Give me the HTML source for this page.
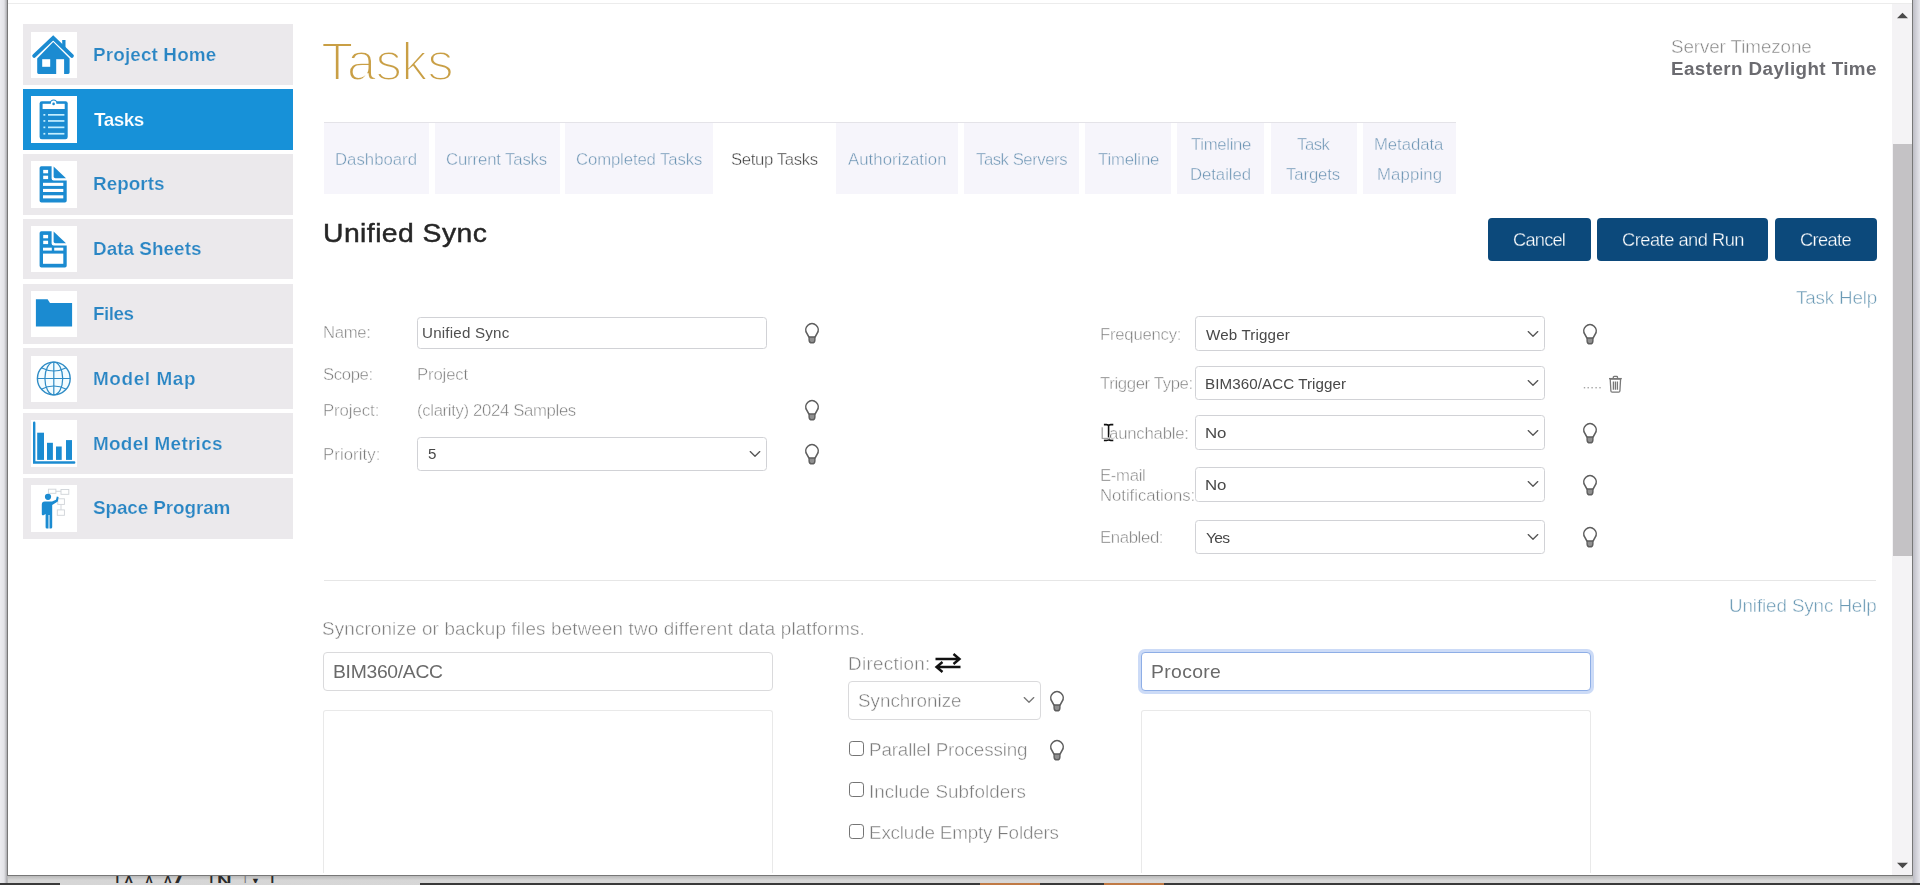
<!DOCTYPE html>
<html lang="en"><head><meta charset="utf-8"><title>Tasks - Unified Sync</title>
<style>
html,body{margin:0;padding:0}
body{width:1920px;height:885px;overflow:hidden;position:relative;background:#d9d9d9;font-family:'Liberation Sans',Arial,sans-serif}
.ab,.tx,.sbi,.tab,.sel,.inp,.box,.cb,.btn{position:absolute}
.tx{white-space:pre;z-index:5;transform-origin:0 0;will-change:transform}
#bg{position:absolute;left:0;top:0;width:1920px;height:885px;background:linear-gradient(90deg,#ebebef 0,#e3e3e7 4px,#b8b8bc 6.4px,#9a9a9e 7px,#d6d6d6 8px,#d9d9d9 1912px,#bebec6 1913px,#e6e6ec 1920px)}
#shade{position:absolute;left:8px;top:876px;width:1905px;height:4px;background:linear-gradient(#b9b9b9,#d4d4d4)}
.or{position:absolute;top:882.5px;height:2.5px;background:#c07a45}
#dark1{position:absolute;left:0;top:883px;width:60px;height:2px;background:#3a3a3a}
#dark2{position:absolute;left:420px;top:883px;width:1500px;height:2px;background:#3a3a3a}
#win{position:absolute;left:7px;top:-1px;width:1906px;height:877px;background:#fff;border:1px solid #777;border-top:none;box-sizing:border-box;overflow:hidden}
#topline{position:absolute;left:8px;top:2.5px;width:1904px;height:1.5px;background:#ececec}
#sbt{position:absolute;left:1892px;top:4px;width:20px;height:871px;background:#f4f3f5}
#sbth{position:absolute;left:1892.6px;top:143.5px;width:19.4px;height:412px;background:#c4c2c5}
.sbi{left:23.3px;width:269.5px;height:60.5px;background:#ebe9ec}
.sbi.act{background:#1791d8}
.ib{position:absolute;left:7.6px;top:7.3px;width:46.2px;height:46.4px;background:#fff}
#tabline{position:absolute;left:323.5px;top:121.7px;width:1132.5px;height:1.3px;background:#e4e3e8}
.tab{top:123px;height:70.7px;background:#f6f5fb}
.tab.on{background:#fff}
.btn{top:217.5px;height:43.2px;background:#0c497b;border-radius:4px}
.sel,.inp{box-sizing:border-box;border:1px solid #d1d2d6;border-radius:3.5px;background:#fff}
.big{border-color:#dadadc;border-radius:4px}
.box{box-sizing:border-box;border:1px solid #e9e9e9;border-bottom:none;border-radius:3px 3px 0 0;background:#fff}
.foc{border:1.5px solid #8eaee6;box-shadow:0 0 0 3px rgba(120,160,235,.38)}
.cb{width:15px;height:15px;box-sizing:border-box;border:1.5px solid #747474;border-radius:3.2px;background:#fff}
#hr{position:absolute;left:323.5px;top:580.2px;width:1552.5px;height:1.2px;background:#e6e6e6}
</style></head><body>

<div id="bg"></div><div id="shade"></div><div id="dark1"></div><div id="dark2"></div><div class="or" style="left:980px;width:60px"></div><div class="or" style="left:1104px;width:60px"></div>
<div id="win"></div>
<div id="topline"></div>
<div id="sbt"></div><div id="sbth"></div>
<svg class="ab" style="left:1896px;top:12px" width="13" height="7" viewBox="0 0 13 7"><path d="M1 6.2 L6.5 0.8 L12 6.2 z" fill="#4a4a4a"/></svg>
<svg class="ab" style="left:1896px;top:861.5px" width="13" height="7" viewBox="0 0 13 7"><path d="M1 0.8 L6.5 6.2 L12 0.8 z" fill="#4a4a4a"/></svg>
<nav><div class="sbi" style="top:24.4px"><i class="ib"></i></div>
<div class="sbi act" style="top:89.2px"><i class="ib"></i></div>
<div class="sbi" style="top:154.0px"><i class="ib"></i></div>
<div class="sbi" style="top:218.8px"><i class="ib"></i></div>
<div class="sbi" style="top:283.6px"><i class="ib"></i></div>
<div class="sbi" style="top:348.4px"><i class="ib"></i></div>
<div class="sbi" style="top:413.2px"><i class="ib"></i></div>
<div class="sbi" style="top:478.0px"><i class="ib"></i></div>
</nav>
<svg class="ab" style="left:24px;top:24px;z-index:3" width="60" height="60" viewBox="0 0 60 60"><path d="M10.2 31.9 L29.2 13.9 L47.9 31.9" fill="none" stroke="#1b8bd1" stroke-width="3.9" stroke-linejoin="miter" stroke-linecap="round"/>
<rect x="38.2" y="16" width="3.3" height="8" fill="#1b8bd1"/>
<path d="M29.2 18.1 L45.6 34.4 V48.6 a1.4 1.4 0 0 1 -1.4 1.4 H14.6 a1.4 1.4 0 0 1 -1.4 -1.4 V34.4 z" fill="#1b8bd1"/>
<rect x="18.2" y="35.2" width="8" height="7.6" fill="#fff"/><rect x="32.2" y="35.2" width="7.9" height="15.2" fill="#fff"/></svg>
<svg class="ab" style="left:24px;top:89px;z-index:3" width="60" height="60" viewBox="0 0 60 60"><rect x="15.6" y="12.3" width="28.1" height="37.9" rx="2.2" fill="#1b8bd1"/>
<circle cx="29.6" cy="13.9" r="3.5" fill="#1b8bd1"/>
<path d="M18.6 14.8 H40.7 V20 H18.6 z" fill="#fff"/>
<circle cx="29.6" cy="14.3" r="2.7" fill="#fff"/>
<circle cx="29.6" cy="14.9" r="1.3" fill="#1b8bd1"/>
<g fill="#c4eeff"><rect x="24" y="25" width="16.4" height="1.7"/><rect x="24" y="31.1" width="16.4" height="1.7"/><rect x="24" y="37.5" width="16.4" height="1.7"/><rect x="24" y="43.9" width="16.4" height="1.7"/>
<rect x="19.4" y="25" width="1.9" height="1.7"/><rect x="19.4" y="31.1" width="1.9" height="1.7"/><rect x="19.4" y="37.5" width="1.9" height="1.7"/><rect x="19.4" y="43.9" width="1.9" height="1.7"/></g></svg>
<svg class="ab" style="left:24px;top:154px;z-index:3" width="60" height="60" viewBox="0 0 60 60"><path d="M17.4 12.2 H27.6 V24.4 a2 2 0 0 0 2 2 H42.7 V46.7 a1.8 1.8 0 0 1 -1.8 1.8 H17.4 a1.8 1.8 0 0 1 -1.8 -1.8 V14 a1.8 1.8 0 0 1 1.8 -1.8 z" fill="#1b8bd1"/>
<path d="M29.6 12.6 L42 24.3 H31.4 a1.8 1.8 0 0 1 -1.8 -1.8 z" fill="#1b8bd1"/>
<rect x="19.2" y="15.9" width="4.9" height="3.4" fill="#fff"/><rect x="19.2" y="21.7" width="4.9" height="3.4" fill="#fff"/><rect x="19" y="28.8" width="20.3" height="3.1" fill="#fff"/><rect x="19" y="34.9" width="20.3" height="3.1" fill="#fff"/><rect x="19" y="41.3" width="20.3" height="3.1" fill="#fff"/></svg>
<svg class="ab" style="left:24px;top:219px;z-index:3" width="60" height="60" viewBox="0 0 60 60"><path d="M17.4 12.2 H27.6 V24.4 a2 2 0 0 0 2 2 H42.7 V46.7 a1.8 1.8 0 0 1 -1.8 1.8 H17.4 a1.8 1.8 0 0 1 -1.8 -1.8 V14 a1.8 1.8 0 0 1 1.8 -1.8 z" fill="#1b8bd1"/>
<path d="M29.6 12.6 L42 24.3 H31.4 a1.8 1.8 0 0 1 -1.8 -1.8 z" fill="#1b8bd1"/>
<rect x="19.2" y="15.9" width="4.9" height="3.4" fill="#fff"/><rect x="19.2" y="21.7" width="4.9" height="3.4" fill="#fff"/><rect x="19" y="28.7" width="8.8" height="2.9" fill="#fff"/><rect x="30.2" y="28.7" width="9.1" height="2.9" fill="#fff"/><rect x="19" y="34.6" width="20.3" height="10.2" fill="#fff"/></svg>
<svg class="ab" style="left:24px;top:283px;z-index:3" width="60" height="60" viewBox="0 0 60 60"><path d="M11.9 16.2 H23.6 L26 20 H48.1 V43.5 H11.9 z" fill="#1b8bd1"/></svg>
<svg class="ab" style="left:24px;top:348px;z-index:3" width="60" height="60" viewBox="0 0 60 60"><circle cx="29.8" cy="30.5" r="16.4" fill="#f3fcff" stroke="#2f8cc6" stroke-width="1.4"/>
<g fill="none" stroke="#2f8cc6" stroke-width="1.2"><ellipse cx="29.8" cy="30.5" rx="8.9" ry="16.4"/><path d="M29.8 14.1 V46.9 M13.4 30.5 H46.2"/>
<path d="M17.3 19.8 Q29.8 26.2 42.3 19.8 M17.3 41.2 Q29.8 34.8 42.3 41.2"/></g></svg>
<svg class="ab" style="left:24px;top:413px;z-index:3" width="60" height="60" viewBox="0 0 60 60"><path d="M10.2 9.8 V49.5 H50.2" fill="none" stroke="#1b8bd1" stroke-width="2.4" stroke-linecap="round"/>
<rect x="13.2" y="19.7" width="6.8" height="27.2" fill="#1b8bd1"/><rect x="23" y="29.8" width="5.9" height="17.1" fill="#1b8bd1"/><rect x="32" y="33.5" width="5.7" height="13.4" fill="#1b8bd1"/><rect x="42" y="27.1" width="6" height="19.8" fill="#1b8bd1"/></svg>
<svg class="ab" style="left:24px;top:478px;z-index:3" width="60" height="60" viewBox="0 0 60 60"><g fill="#fff" stroke="#cfd3d8" stroke-width="0.9"><rect x="24.4" y="11.2" width="7.5" height="4.1"/><rect x="37" y="11.5" width="7.8" height="4.8"/><rect x="33.3" y="31.9" width="7.1" height="5.4"/><rect x="33.8" y="20.8" width="6.6" height="5.6"/><path d="M31.9 13.3 H37 M37 27 V31.9" fill="none"/></g>
<circle cx="24" cy="18.8" r="3.1" fill="#1b8bd1"/>
<path d="M19.2 23.6 H28 L32 21.8 L32.8 18.6 L34.6 19 L33.8 23.6 L28.2 27 V49.2 a1.3 1.3 0 0 1 -1.3 1.3 h-1.4 V37 h-1 V50.5 h-1.6 a1.3 1.3 0 0 1 -1.3 -1.3 V36 l-2 1.2 a1.2 1.2 0 0 1 -1.8 -1 V26.6 a3 3 0 0 1 3 -3 z" fill="#1b8bd1"/></svg>
<div id="tabline"></div>
<div class="tab" style="left:323.8px;width:104.8px"></div>
<div class="tab" style="left:435px;width:124.8px"></div>
<div class="tab" style="left:565px;width:148.3px"></div>
<div class="tab on" style="left:713.3px;width:122.7px"></div>
<div class="tab" style="left:836px;width:122.4px"></div>
<div class="tab" style="left:964px;width:115.3px"></div>
<div class="tab" style="left:1085px;width:86.3px"></div>
<div class="tab" style="left:1176.8px;width:87.2px"></div>
<div class="tab" style="left:1271.2px;width:85.8px"></div>
<div class="tab" style="left:1362.5px;width:93.5px"></div>

<div class="btn" style="left:1488px;width:102.5px"></div>
<div class="btn" style="left:1596.8px;width:171.5px"></div>
<div class="btn" style="left:1775px;width:102px"></div>
<div class="inp" style="left:417px;top:316.6px;width:350px;height:32.2px"></div><div class="sel" style="left:417px;top:436.6px;width:350px;height:34px"></div><svg class="ab" style="left:748px;top:448.6px" width="14" height="10" viewBox="0 0 14 10"><path d="M2.2 2.6 L7 7.2 L11.8 2.6" fill="none" stroke="#555" stroke-width="1.35" stroke-linecap="round" stroke-linejoin="round"/></svg><div class="sel" style="left:1195px;top:316.4px;width:349.7px;height:34.4px"></div><svg class="ab" style="left:1526px;top:328.59999999999997px" width="14" height="10" viewBox="0 0 14 10"><path d="M2.2 2.6 L7 7.2 L11.8 2.6" fill="none" stroke="#555" stroke-width="1.35" stroke-linecap="round" stroke-linejoin="round"/></svg><div class="sel" style="left:1195px;top:365.9px;width:349.7px;height:34.4px"></div><svg class="ab" style="left:1526px;top:378.09999999999997px" width="14" height="10" viewBox="0 0 14 10"><path d="M2.2 2.6 L7 7.2 L11.8 2.6" fill="none" stroke="#555" stroke-width="1.35" stroke-linecap="round" stroke-linejoin="round"/></svg><div class="sel" style="left:1195px;top:415.4px;width:349.7px;height:34.2px"></div><svg class="ab" style="left:1526px;top:427.5px" width="14" height="10" viewBox="0 0 14 10"><path d="M2.2 2.6 L7 7.2 L11.8 2.6" fill="none" stroke="#555" stroke-width="1.35" stroke-linecap="round" stroke-linejoin="round"/></svg><div class="sel" style="left:1195px;top:467.2px;width:349.7px;height:34.4px"></div><svg class="ab" style="left:1526px;top:479.4px" width="14" height="10" viewBox="0 0 14 10"><path d="M2.2 2.6 L7 7.2 L11.8 2.6" fill="none" stroke="#555" stroke-width="1.35" stroke-linecap="round" stroke-linejoin="round"/></svg><div class="sel" style="left:1195px;top:520.3px;width:349.7px;height:33.6px"></div><svg class="ab" style="left:1526px;top:532.0999999999999px" width="14" height="10" viewBox="0 0 14 10"><path d="M2.2 2.6 L7 7.2 L11.8 2.6" fill="none" stroke="#555" stroke-width="1.35" stroke-linecap="round" stroke-linejoin="round"/></svg><div class="inp big" style="left:323.2px;top:651.5px;width:449.8px;height:39px"></div><div class="box" style="left:323.2px;top:710px;width:449.8px;height:163px"></div><div class="box" style="left:1141.4px;top:710px;width:449.8px;height:163px"></div><div class="sel big" style="left:848.2px;top:680.6px;width:192.6px;height:39.4px"></div><svg class="ab" style="left:1022px;top:695.3px" width="14" height="10" viewBox="0 0 14 10"><path d="M2.2 2.6 L7 7.2 L11.8 2.6" fill="none" stroke="#777" stroke-width="1.35" stroke-linecap="round" stroke-linejoin="round"/></svg><div class="inp big foc" style="left:1141.4px;top:651.8px;width:449.8px;height:38.9px"></div><svg class="ab" style="left:803.20px;top:321.30px" width="18" height="24" viewBox="0 0 18 24"><path d="M6.1 16.4 L3.9 12.4 A6.2 6.2 0 1 1 14.1 12.4 L11.9 16.4" fill="#fff" stroke="#5e5e5e" stroke-width="1.6" stroke-linejoin="round"/><path d="M6.1 16 h5.8 v2.9 a2.9 2.9 0 0 1 -5.8 0 z" fill="#909090" stroke="#5e5e5e" stroke-width="1.4"/></svg><svg class="ab" style="left:803.20px;top:398.30px" width="18" height="24" viewBox="0 0 18 24"><path d="M6.1 16.4 L3.9 12.4 A6.2 6.2 0 1 1 14.1 12.4 L11.9 16.4" fill="#fff" stroke="#5e5e5e" stroke-width="1.6" stroke-linejoin="round"/><path d="M6.1 16 h5.8 v2.9 a2.9 2.9 0 0 1 -5.8 0 z" fill="#909090" stroke="#5e5e5e" stroke-width="1.4"/></svg><svg class="ab" style="left:803.20px;top:441.80px" width="18" height="24" viewBox="0 0 18 24"><path d="M6.1 16.4 L3.9 12.4 A6.2 6.2 0 1 1 14.1 12.4 L11.9 16.4" fill="#fff" stroke="#5e5e5e" stroke-width="1.6" stroke-linejoin="round"/><path d="M6.1 16 h5.8 v2.9 a2.9 2.9 0 0 1 -5.8 0 z" fill="#909090" stroke="#5e5e5e" stroke-width="1.4"/></svg><svg class="ab" style="left:1581.10px;top:321.80px" width="18" height="24" viewBox="0 0 18 24"><path d="M6.1 16.4 L3.9 12.4 A6.2 6.2 0 1 1 14.1 12.4 L11.9 16.4" fill="#fff" stroke="#5e5e5e" stroke-width="1.6" stroke-linejoin="round"/><path d="M6.1 16 h5.8 v2.9 a2.9 2.9 0 0 1 -5.8 0 z" fill="#909090" stroke="#5e5e5e" stroke-width="1.4"/></svg><svg class="ab" style="left:1581.10px;top:420.80px" width="18" height="24" viewBox="0 0 18 24"><path d="M6.1 16.4 L3.9 12.4 A6.2 6.2 0 1 1 14.1 12.4 L11.9 16.4" fill="#fff" stroke="#5e5e5e" stroke-width="1.6" stroke-linejoin="round"/><path d="M6.1 16 h5.8 v2.9 a2.9 2.9 0 0 1 -5.8 0 z" fill="#909090" stroke="#5e5e5e" stroke-width="1.4"/></svg><svg class="ab" style="left:1581.10px;top:472.80px" width="18" height="24" viewBox="0 0 18 24"><path d="M6.1 16.4 L3.9 12.4 A6.2 6.2 0 1 1 14.1 12.4 L11.9 16.4" fill="#fff" stroke="#5e5e5e" stroke-width="1.6" stroke-linejoin="round"/><path d="M6.1 16 h5.8 v2.9 a2.9 2.9 0 0 1 -5.8 0 z" fill="#909090" stroke="#5e5e5e" stroke-width="1.4"/></svg><svg class="ab" style="left:1581.10px;top:525.30px" width="18" height="24" viewBox="0 0 18 24"><path d="M6.1 16.4 L3.9 12.4 A6.2 6.2 0 1 1 14.1 12.4 L11.9 16.4" fill="#fff" stroke="#5e5e5e" stroke-width="1.6" stroke-linejoin="round"/><path d="M6.1 16 h5.8 v2.9 a2.9 2.9 0 0 1 -5.8 0 z" fill="#909090" stroke="#5e5e5e" stroke-width="1.4"/></svg><svg class="ab" style="left:1048.40px;top:688.60px" width="18" height="24" viewBox="0 0 18 24"><path d="M6.1 16.4 L3.9 12.4 A6.2 6.2 0 1 1 14.1 12.4 L11.9 16.4" fill="#fff" stroke="#5e5e5e" stroke-width="1.6" stroke-linejoin="round"/><path d="M6.1 16 h5.8 v2.9 a2.9 2.9 0 0 1 -5.8 0 z" fill="#909090" stroke="#5e5e5e" stroke-width="1.4"/></svg><svg class="ab" style="left:1048.40px;top:738.00px" width="18" height="24" viewBox="0 0 18 24"><path d="M6.1 16.4 L3.9 12.4 A6.2 6.2 0 1 1 14.1 12.4 L11.9 16.4" fill="#fff" stroke="#5e5e5e" stroke-width="1.6" stroke-linejoin="round"/><path d="M6.1 16 h5.8 v2.9 a2.9 2.9 0 0 1 -5.8 0 z" fill="#909090" stroke="#5e5e5e" stroke-width="1.4"/></svg><div class="cb" style="left:848.6px;top:741px"></div><div class="cb" style="left:848.6px;top:782.4px"></div><div class="cb" style="left:848.6px;top:823.6px"></div>
<div id="hr"></div>
<svg class="ab" style="left:1581px;top:374px" width="44" height="22" viewBox="0 0 44 22">
<g fill="#a4a4a4"><rect x="2.8" y="13" width="1.4" height="1.4"/><rect x="6.5" y="13" width="1.4" height="1.4"/><rect x="10.4" y="13" width="1.4" height="1.4"/><rect x="14.4" y="13" width="1.4" height="1.4"/><rect x="18.3" y="13" width="1.4" height="1.4"/></g>
<g fill="none" stroke="#787878" stroke-width="1.3"><path d="M29.2 5 h10.4 l-0.7 12 a1.3 1.3 0 0 1 -1.3 1.2 h-6.4 a1.3 1.3 0 0 1 -1.3 -1.2 z"/><path d="M28 4.6 h12.8"/><path d="M32.3 4.4 v-1.2 a0.8 0.8 0 0 1 .8 -.8 h2.6 a.8 .8 0 0 1 .8 .8 v1.2"/><path d="M32.4 7.5 v8.2 M34.4 7.5 v8.2 M36.4 7.5 v8.2"/></g></svg>
<svg class="ab" style="left:1103px;top:422px" width="12" height="21" viewBox="0 0 12 21"><path d="M0.9 2.6 h2.6 q1.9 0 2.1 1.3 q.2 -1.3 2.1 -1.3 h2.6 M5.6 3.4 v14.2 M0.9 18.4 h2.6 q1.9 0 2.1 -1.3 q.2 1.3 2.1 1.3 h2.6" fill="none" stroke="#111" stroke-width="1.6"/></svg>
<svg class="ab" style="left:933px;top:651px" width="30" height="24" viewBox="0 0 30 24"><g fill="none" stroke="#111" stroke-width="2.4" stroke-linecap="butt" stroke-linejoin="miter"><path d="M2.5 8 H26 M20.5 3 L26.5 8 L20.5 13"/><path d="M27.5 16 H4 M9.5 11 L3.5 16 L9.5 21"/></g></svg>
<span class="tx" id="sb0" style="left:92.57px;top:43.86px;font-size:18px;line-height:23px;font-weight:700;color:#2a86c4;letter-spacing:0.125px;transform:scaleX(1.05);-webkit-text-stroke:0.2px #ebe9ec;">Project Home</span>
<span class="tx" id="sb1" style="left:93.69px;top:108.66px;font-size:18px;line-height:23px;font-weight:700;color:#fff;letter-spacing:-0.448px;transform:scaleX(1.05);-webkit-text-stroke:0.2px #1791d8;">Tasks</span>
<span class="tx" id="sb2" style="left:92.57px;top:173.46px;font-size:18px;line-height:23px;font-weight:700;color:#2a86c4;letter-spacing:0.008px;transform:scaleX(1.05);-webkit-text-stroke:0.2px #ebe9ec;">Reports</span>
<span class="tx" id="sb3" style="left:92.57px;top:238.26px;font-size:18px;line-height:23px;font-weight:700;color:#2a86c4;letter-spacing:0.026px;transform:scaleX(1.05);-webkit-text-stroke:0.2px #ebe9ec;">Data Sheets</span>
<span class="tx" id="sb4" style="left:92.57px;top:303.06px;font-size:18px;line-height:23px;font-weight:700;color:#2a86c4;letter-spacing:-0.471px;transform:scaleX(1.05);-webkit-text-stroke:0.2px #ebe9ec;">Files</span>
<span class="tx" id="sb5" style="left:92.57px;top:367.86px;font-size:18px;line-height:23px;font-weight:700;color:#2a86c4;letter-spacing:0.574px;transform:scaleX(1.05);-webkit-text-stroke:0.2px #ebe9ec;">Model Map</span>
<span class="tx" id="sb6" style="left:92.57px;top:432.66px;font-size:18px;line-height:23px;font-weight:700;color:#2a86c4;letter-spacing:0.273px;transform:scaleX(1.05);-webkit-text-stroke:0.2px #ebe9ec;">Model Metrics</span>
<span class="tx" id="sb7" style="left:92.57px;top:497.46px;font-size:18px;line-height:23px;font-weight:700;color:#2a86c4;letter-spacing:-0.103px;transform:scaleX(1.05);-webkit-text-stroke:0.2px #ebe9ec;">Space Program</span>
<span class="tx" id="title" style="left:321.07px;top:27.14px;font-size:53px;line-height:69px;font-weight:400;color:#c99f45;letter-spacing:-0.706px;transform:scaleX(1.0);-webkit-text-stroke:2.2px #fff;">Tasks</span>
<span class="tx" id="tz1" style="left:1671.37px;top:35.76px;font-size:18px;line-height:23px;font-weight:400;color:#858585;letter-spacing:-0.099px;transform:scaleX(1.045);-webkit-text-stroke:0.45px #fff;">Server Timezone</span>
<span class="tx" id="tz2" style="left:1671.37px;top:57.86px;font-size:18px;line-height:23px;font-weight:700;color:#6b6b70;letter-spacing:0.394px;transform:scaleX(1.045);">Eastern Daylight Time</span>
<span class="tx" id="tab0" style="left:335.25px;top:149.46px;font-size:16px;line-height:21px;font-weight:400;color:#6c94b3;letter-spacing:0.024px;transform:scaleX(1.045);-webkit-text-stroke:0.4px #f6f5fb;">Dashboard</span>
<span class="tx" id="tab1" style="left:446.00px;top:149.46px;font-size:16px;line-height:21px;font-weight:400;color:#6c94b3;letter-spacing:-0.130px;transform:scaleX(1.045);-webkit-text-stroke:0.4px #f6f5fb;">Current Tasks</span>
<span class="tx" id="tab2" style="left:576.00px;top:149.46px;font-size:16px;line-height:21px;font-weight:400;color:#6c94b3;letter-spacing:-0.116px;transform:scaleX(1.045);-webkit-text-stroke:0.4px #f6f5fb;">Completed Tasks</span>
<span class="tx" id="tab3" style="left:730.60px;top:149.46px;font-size:16px;line-height:21px;font-weight:400;color:#3c3c3c;letter-spacing:-0.350px;transform:scaleX(1.045);-webkit-text-stroke:0.4px #fff;">Setup Tasks</span>
<span class="tx" id="tab4" style="left:847.62px;top:149.46px;font-size:16px;line-height:21px;font-weight:400;color:#6c94b3;letter-spacing:0.072px;transform:scaleX(1.045);-webkit-text-stroke:0.4px #f6f5fb;">Authorization</span>
<span class="tx" id="tab5" style="left:976.16px;top:149.46px;font-size:16px;line-height:21px;font-weight:400;color:#6c94b3;letter-spacing:-0.447px;transform:scaleX(1.045);-webkit-text-stroke:0.4px #f6f5fb;">Task Servers</span>
<span class="tx" id="tab6" style="left:1098.16px;top:149.46px;font-size:16px;line-height:21px;font-weight:400;color:#6c94b3;letter-spacing:-0.173px;transform:scaleX(1.045);-webkit-text-stroke:0.4px #f6f5fb;">Timeline</span>
<span class="tx" id="tab7a" style="left:1190.80px;top:134.06px;font-size:16px;line-height:21px;font-weight:400;color:#6c94b3;letter-spacing:-0.296px;transform:scaleX(1.045);-webkit-text-stroke:0.4px #f6f5fb;">Timeline</span>
<span class="tx" id="tab7b" style="left:1190.30px;top:164.36px;font-size:16px;line-height:21px;font-weight:400;color:#6c94b3;letter-spacing:-0.046px;transform:scaleX(1.045);-webkit-text-stroke:0.4px #f6f5fb;">Detailed</span>
<span class="tx" id="tab8a" style="left:1296.80px;top:134.06px;font-size:16px;line-height:21px;font-weight:400;color:#6c94b3;letter-spacing:-0.460px;transform:scaleX(1.045);-webkit-text-stroke:0.4px #f6f5fb;">Task</span>
<span class="tx" id="tab8b" style="left:1285.60px;top:164.36px;font-size:16px;line-height:21px;font-weight:400;color:#6c94b3;letter-spacing:-0.112px;transform:scaleX(1.045);-webkit-text-stroke:0.4px #f6f5fb;">Targets</span>
<span class="tx" id="tab9a" style="left:1373.80px;top:134.06px;font-size:16px;line-height:21px;font-weight:400;color:#6c94b3;letter-spacing:-0.057px;transform:scaleX(1.045);-webkit-text-stroke:0.4px #f6f5fb;">Metadata</span>
<span class="tx" id="tab9b" style="left:1376.80px;top:164.36px;font-size:16px;line-height:21px;font-weight:400;color:#6c94b3;letter-spacing:0.155px;transform:scaleX(1.045);-webkit-text-stroke:0.4px #f6f5fb;">Mapping</span>
<span class="tx" id="h2" style="left:322.55px;top:215.74px;font-size:26px;line-height:34px;font-weight:400;color:#262626;letter-spacing:0.400px;transform:scaleX(1.09);-webkit-text-stroke:0.45px #262626;">Unified Sync</span>
<span class="tx" id="b0" style="left:1513.15px;top:229.19px;font-size:17.5px;line-height:23px;font-weight:400;color:#fff;letter-spacing:-0.764px;transform:scaleX(1.045);-webkit-text-stroke:0.3px #0c497b;">Cancel</span>
<span class="tx" id="b1" style="left:1621.85px;top:229.19px;font-size:17.5px;line-height:23px;font-weight:400;color:#fff;letter-spacing:-0.488px;transform:scaleX(1.045);-webkit-text-stroke:0.3px #0c497b;">Create and Run</span>
<span class="tx" id="b2" style="left:1799.70px;top:229.19px;font-size:17.5px;line-height:23px;font-weight:400;color:#fff;letter-spacing:-0.613px;transform:scaleX(1.045);-webkit-text-stroke:0.3px #0c497b;">Create</span>
<span class="tx" id="help1" style="left:1796.12px;top:287.26px;font-size:18px;line-height:23px;font-weight:400;color:#6b9ab5;letter-spacing:-0.165px;transform:scaleX(1.045);-webkit-text-stroke:0.45px #fff;">Task Help</span>
<span class="tx" id="l0" style="left:323.00px;top:322.21px;font-size:16px;line-height:21px;font-weight:400;color:#7a7a7a;letter-spacing:-0.296px;transform:scaleX(1.045);-webkit-text-stroke:0.45px #fff;">Name:</span>
<span class="tx" id="l1" style="left:322.50px;top:364.46px;font-size:16px;line-height:21px;font-weight:400;color:#7a7a7a;letter-spacing:-0.373px;transform:scaleX(1.045);-webkit-text-stroke:0.45px #fff;">Scope:</span>
<span class="tx" id="l2" style="left:322.50px;top:400.21px;font-size:16px;line-height:21px;font-weight:400;color:#7a7a7a;letter-spacing:-0.053px;transform:scaleX(1.045);-webkit-text-stroke:0.45px #fff;">Project:</span>
<span class="tx" id="l3" style="left:322.50px;top:444.46px;font-size:16px;line-height:21px;font-weight:400;color:#7a7a7a;letter-spacing:0.076px;transform:scaleX(1.045);-webkit-text-stroke:0.45px #fff;">Priority:</span>
<span class="tx" id="v0" style="left:422.34px;top:324.23px;font-size:14.5px;line-height:19px;font-weight:400;color:#505050;letter-spacing:0.196px;transform:scaleX(1.045);">Unified Sync</span>
<span class="tx" id="v1" style="left:416.50px;top:364.46px;font-size:16px;line-height:21px;font-weight:400;color:#7a7a7a;letter-spacing:-0.133px;transform:scaleX(1.045);-webkit-text-stroke:0.45px #fff;">Project</span>
<span class="tx" id="v2" style="left:416.50px;top:400.21px;font-size:16px;line-height:21px;font-weight:400;color:#7a7a7a;letter-spacing:-0.324px;transform:scaleX(1.045);-webkit-text-stroke:0.45px #fff;">(clarity) 2024 Samples</span>
<span class="tx" id="v3" style="left:427.89px;top:445.48px;font-size:14.5px;line-height:19px;font-weight:400;color:#484848;letter-spacing:0.000px;transform:scaleX(1.045);">5</span>
<span class="tx" id="r0" style="left:1099.50px;top:324.46px;font-size:16px;line-height:21px;font-weight:400;color:#7a7a7a;letter-spacing:-0.228px;transform:scaleX(1.045);-webkit-text-stroke:0.45px #fff;">Frequency:</span>
<span class="tx" id="r1" style="left:1099.50px;top:373.21px;font-size:16px;line-height:21px;font-weight:400;color:#7a7a7a;letter-spacing:-0.349px;transform:scaleX(1.045);-webkit-text-stroke:0.45px #fff;">Trigger Type:</span>
<span class="tx" id="r2" style="left:1099.50px;top:423.21px;font-size:16px;line-height:21px;font-weight:400;color:#7a7a7a;letter-spacing:-0.201px;transform:scaleX(1.045);-webkit-text-stroke:0.45px #fff;">Launchable:</span>
<span class="tx" id="r3a" style="left:1099.50px;top:465.21px;font-size:16px;line-height:21px;font-weight:400;color:#7a7a7a;letter-spacing:-0.312px;transform:scaleX(1.045);-webkit-text-stroke:0.45px #fff;">E-mail</span>
<span class="tx" id="r3b" style="left:1099.50px;top:485.21px;font-size:16px;line-height:21px;font-weight:400;color:#7a7a7a;letter-spacing:-0.034px;transform:scaleX(1.045);-webkit-text-stroke:0.45px #fff;">Notifications:</span>
<span class="tx" id="r4" style="left:1099.50px;top:527.36px;font-size:16px;line-height:21px;font-weight:400;color:#7a7a7a;letter-spacing:-0.343px;transform:scaleX(1.045);-webkit-text-stroke:0.45px #fff;">Enabled:</span>
<span class="tx" id="s0" style="left:1206.34px;top:325.98px;font-size:14.5px;line-height:19px;font-weight:400;color:#484848;letter-spacing:0.144px;transform:scaleX(1.045);">Web Trigger</span>
<span class="tx" id="s1" style="left:1205.34px;top:375.23px;font-size:14.5px;line-height:19px;font-weight:400;color:#484848;letter-spacing:0.071px;transform:scaleX(1.045);">BIM360/ACC Trigger</span>
<span class="tx" id="s2" style="left:1205.24px;top:424.23px;font-size:14.5px;line-height:19px;font-weight:400;color:#484848;letter-spacing:-0.212px;transform:scaleX(1.16);">No</span>
<span class="tx" id="s3" style="left:1205.24px;top:475.98px;font-size:14.5px;line-height:19px;font-weight:400;color:#484848;letter-spacing:-0.212px;transform:scaleX(1.16);">No</span>
<span class="tx" id="s4" style="left:1206.31px;top:529.18px;font-size:14.5px;line-height:19px;font-weight:400;color:#484848;letter-spacing:-0.676px;transform:scaleX(1.08);">Yes</span>
<span class="tx" id="desc" style="left:322.37px;top:617.51px;font-size:18px;line-height:23px;font-weight:400;color:#7a7a7a;letter-spacing:0.150px;transform:scaleX(1.045);-webkit-text-stroke:0.45px #fff;">Syncronize or backup files between two different data platforms.</span>
<span class="tx" id="help2" style="left:1728.87px;top:595.46px;font-size:18px;line-height:23px;font-weight:400;color:#6b9ab5;letter-spacing:-0.106px;transform:scaleX(1.045);-webkit-text-stroke:0.45px #fff;">Unified Sync Help</span>
<span class="tx" id="in1" style="left:333.09px;top:660.34px;font-size:18.5px;line-height:24px;font-weight:400;color:#6a6a6a;letter-spacing:-0.293px;transform:scaleX(1.045);">BIM360/ACC</span>
<span class="tx" id="in2" style="left:1150.84px;top:659.59px;font-size:18.5px;line-height:24px;font-weight:400;color:#6a6a6a;letter-spacing:0.339px;transform:scaleX(1.045);">Procore</span>
<span class="tx" id="dir" style="left:847.62px;top:652.76px;font-size:18px;line-height:23px;font-weight:400;color:#7a7a7a;letter-spacing:0.298px;transform:scaleX(1.045);-webkit-text-stroke:0.45px #fff;">Direction:</span>
<span class="tx" id="sync" style="left:858.37px;top:690.26px;font-size:18px;line-height:23px;font-weight:400;color:#7a7a7a;letter-spacing:-0.001px;transform:scaleX(1.045);-webkit-text-stroke:0.45px #fff;">Synchronize</span>
<span class="tx" id="c0" style="left:868.87px;top:739.01px;font-size:18px;line-height:23px;font-weight:400;color:#7a7a7a;letter-spacing:-0.133px;transform:scaleX(1.045);-webkit-text-stroke:0.45px #fff;">Parallel Processing</span>
<span class="tx" id="c1" style="left:868.87px;top:780.76px;font-size:18px;line-height:23px;font-weight:400;color:#7a7a7a;letter-spacing:0.067px;transform:scaleX(1.045);-webkit-text-stroke:0.45px #fff;">Include Subfolders</span>
<span class="tx" id="c2" style="left:868.87px;top:821.51px;font-size:18px;line-height:23px;font-weight:400;color:#7a7a7a;letter-spacing:-0.163px;transform:scaleX(1.045);-webkit-text-stroke:0.45px #fff;">Exclude Empty Folders</span>
<div class="ab" style="left:110px;top:875px;width:175px;height:8px;overflow:hidden;z-index:0;font:700 13px/13px 'Liberation Sans',sans-serif;color:#2a2a2a"><span class="ab" style="left:5.5px;top:-1.5px">I</span><span class="ab" style="left:13.5px;top:-1.5px;transform:scaleX(1.1);transform-origin:0 0">&#923;</span><span class="ab" style="left:34.5px;top:-1.5px;transform:scaleX(.95);transform-origin:0 0">&#923;</span><span class="ab" style="left:53.5px;top:-1.5px">&#923;</span><span class="ab" style="left:64px;top:-1.5px;transform:scaleX(2.2);transform-origin:0 0">/</span><span class="ab" style="left:99.5px;top:-1.5px">I</span><span class="ab" style="left:107px;top:-1.5px;transform:scaleX(1.55);transform-origin:0 0">N</span><span class="ab" style="left:133.5px;top:-1.5px;font-weight:400;color:#777">|</span><span class="ab" style="left:141px;top:0px;font-size:9px">&#9660;</span><span class="ab" style="left:160.5px;top:-1.5px">I</span></div>
</body></html>
